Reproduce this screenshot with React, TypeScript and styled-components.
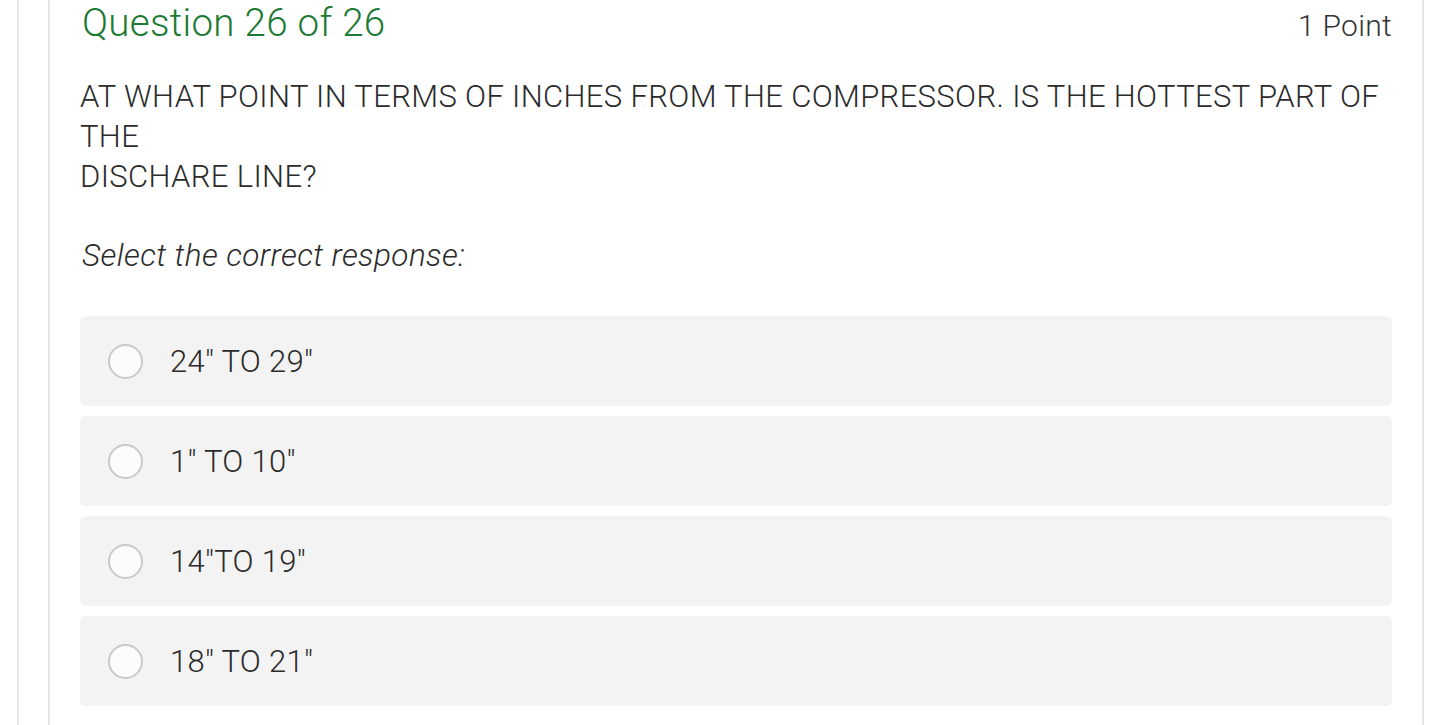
import React from 'react';
import styled, { createGlobalStyle } from 'styled-components';

const GlobalStyle = createGlobalStyle`
  html, body {
    margin: 0;
    padding: 0;
    background: #fff;
  }
  body {
    font-family: Roboto, 'Liberation Sans', Arial, sans-serif;
    overflow: hidden;
  }
`;

const Page = styled.div`
  height: 725px;
  padding-left: 17px;
  box-sizing: border-box;
`;

const Rail = styled.div`
  height: 100%;
  border-left: 2px solid #e6e6e6;
  padding-left: 29px;
`;

const Card = styled.div`
  width: 1376px;
  height: 100%;
  box-sizing: border-box;
  border-left: 2px solid #e6e6e6;
  border-right: 2px solid #e6e6e6;
  padding: 0 30px;
`;

const Header = styled.div`
  display: flex;
  justify-content: space-between;
  align-items: baseline;
  height: 46px;
`;

const Title = styled.h2`
  margin: 0 0 0 2px;
  font-size: 38.5px;
  font-weight: 300;
  letter-spacing: 0.3px;
  line-height: 46px;
  color: #1d7a35;
`;

const Points = styled.span`
  font-size: 30px;
  font-weight: 300;
  letter-spacing: 0.3px;
  color: #333;
`;

const Prompt = styled.p`
  margin: 31px 0 0;
  font-size: 31px;
  font-weight: 300;
  letter-spacing: 0.35px;
  line-height: 40px;
  color: #2b2b2b;
`;

const Instruction = styled.p`
  margin: 39px 0 0 2px;
  font-size: 31.5px;
  font-weight: 300;
  font-style: italic;
  letter-spacing: 0.4px;
  line-height: 40px;
  color: #2b2b2b;
`;

const Options = styled.div`
  display: flex;
  flex-direction: column;
  gap: 10px;
  margin-top: 40px;
`;

const Option = styled.label`
  display: flex;
  align-items: center;
  gap: 27px;
  height: 90px;
  padding-left: 28px;
  box-sizing: border-box;
  background: #f3f3f3;
  border-radius: 6px;
  cursor: pointer;
`;

const Radio = styled.span`
  width: 35px;
  height: 35px;
  box-sizing: border-box;
  border-radius: 50%;
  border: 2px solid #c9c9c9;
  background: #fcfcfc;
  flex-shrink: 0;
`;

const OptionText = styled.span`
  font-size: 31px;
  font-weight: 300;
  letter-spacing: 0.3px;
  color: #2b2b2b;
`;

const answers = ['24" TO 29"', '1" TO 10"', '14"TO 19"', '18" TO 21"'];

export default function App() {
  return (
    <>
      <GlobalStyle />
      <Page>
        <Rail>
          <Card>
            <Header>
              <Title>Question 26 of 26</Title>
              <Points>1 Point</Points>
            </Header>
            <Prompt>
              AT WHAT POINT IN TERMS OF INCHES FROM THE COMPRESSOR. IS THE HOTTEST PART OF
              <br />
              THE
              <br />
              DISCHARE LINE?
            </Prompt>
            <Instruction>Select the correct response:</Instruction>
            <Options>
              {answers.map((a) => (
                <Option key={a}>
                  <Radio />
                  <OptionText>{a}</OptionText>
                </Option>
              ))}
            </Options>
          </Card>
        </Rail>
      </Page>
    </>
  );
}
